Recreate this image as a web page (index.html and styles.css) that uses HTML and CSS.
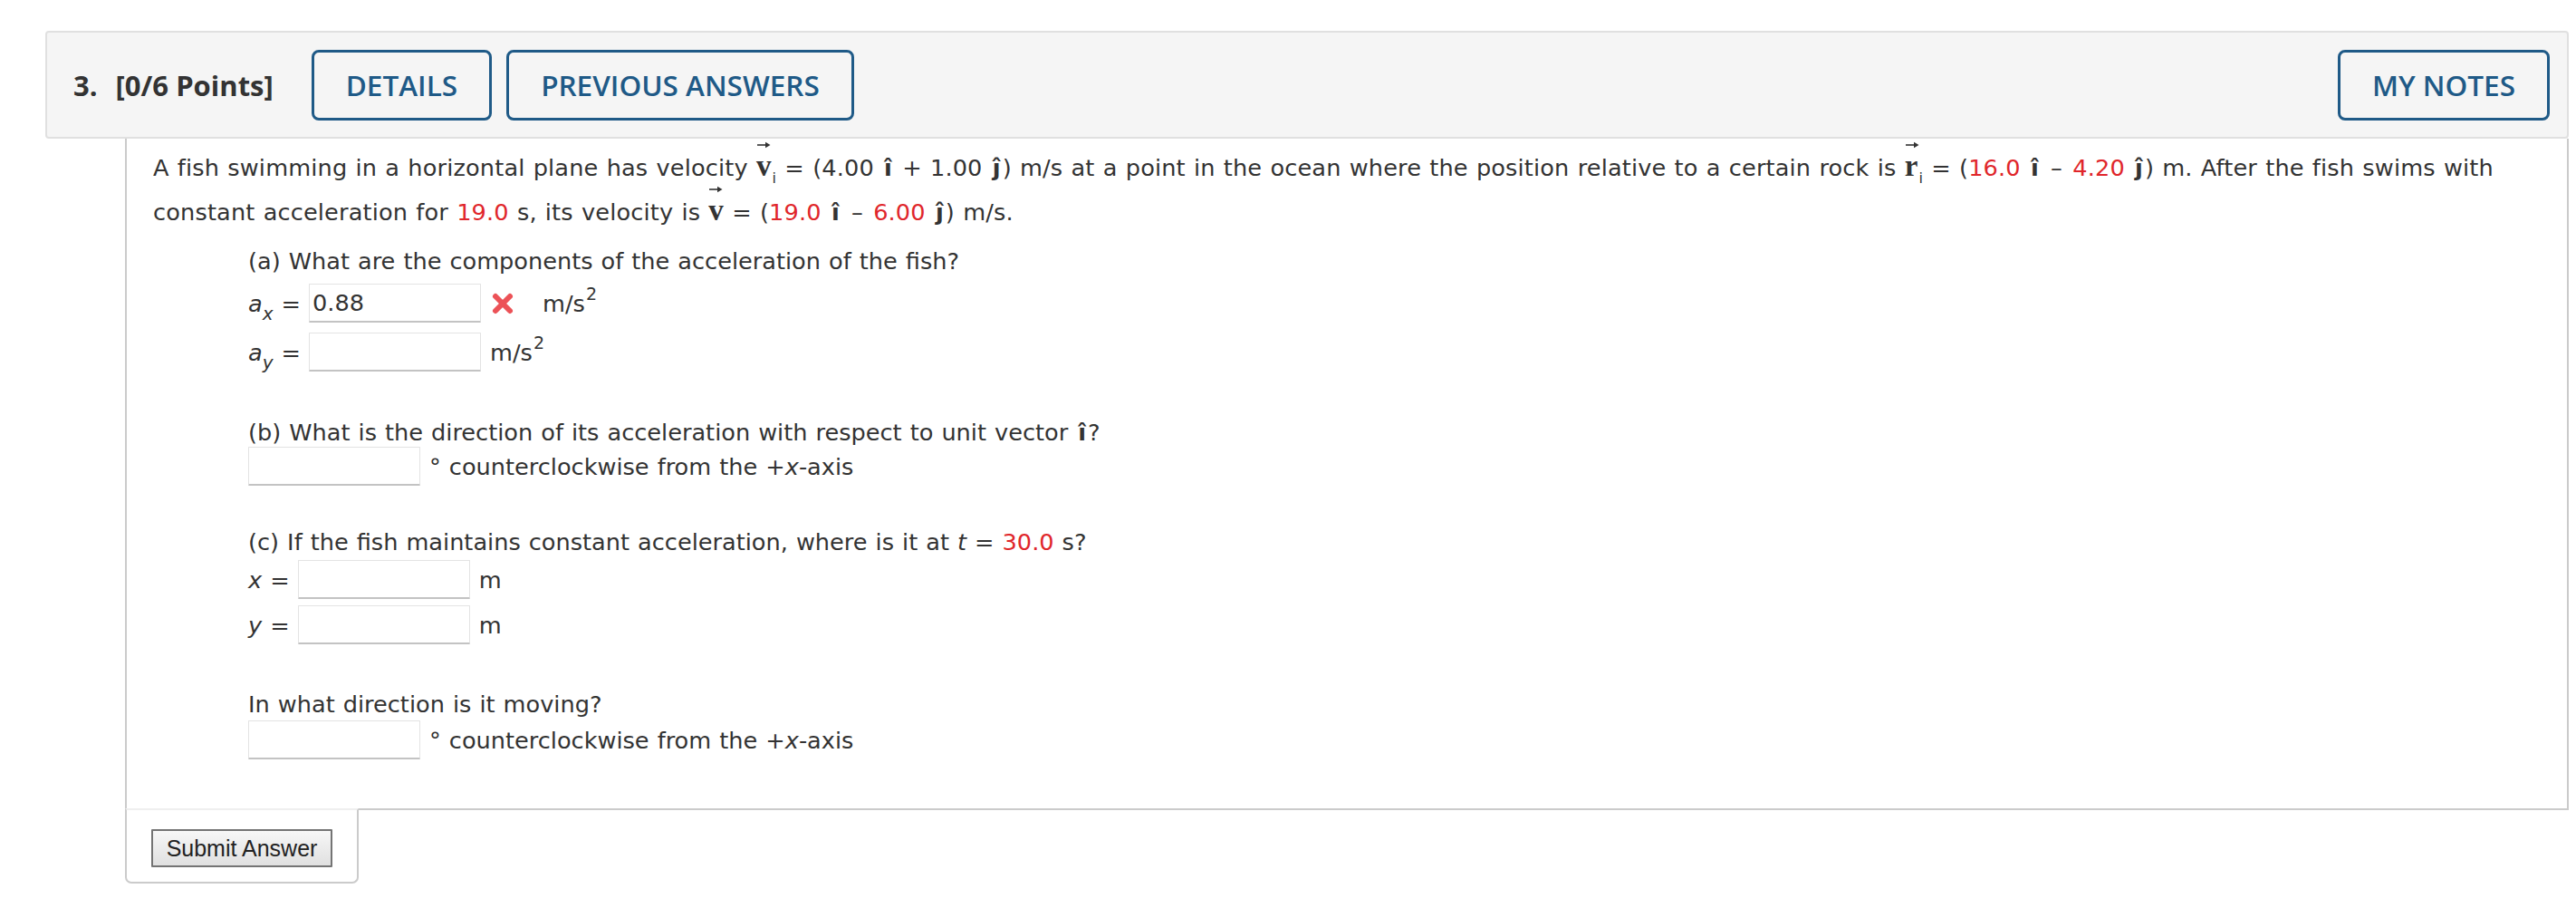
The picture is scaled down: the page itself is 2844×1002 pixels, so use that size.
FILE: index.html
```html
<!DOCTYPE html>
<html>
<head>
<meta charset="utf-8">
<link rel="stylesheet" href="styles.css">
</head>
<body>
<div class="question">
  <div class="qheader">
    <div class="qtitle"><span class="qnum">3.</span><span class="qpts">[0/6 Points]</span></div>
    <button class="hbtn">DETAILS</button>
    <button class="hbtn">PREVIOUS ANSWERS</button>
    <div class="spacer"></div>
    <button class="hbtn">MY NOTES</button>
  </div>
  <div class="qbody">
    <div class="qcontent">
      <p class="stem"><span class="ln">A fish swimming in a horizontal plane has velocity <span class="vec"><span class="vl">v</span><svg class="arr" viewBox="0 0 16 8"><line x1="1" y1="4" x2="12" y2="4" stroke="#333" stroke-width="1.6"/><polygon points="10,0.8 15.5,4 10,7.2" fill="#333"/></svg><span class="vsub">i</span></span> = (4.00 <b class="uv">î</b> + 1.00 <b class="uv">ĵ</b>) m/s at a point in the ocean where the position relative to a certain rock is <span class="vec"><span class="vl">r</span><svg class="arr" viewBox="0 0 16 8"><line x1="1" y1="4" x2="12" y2="4" stroke="#333" stroke-width="1.6"/><polygon points="10,0.8 15.5,4 10,7.2" fill="#333"/></svg><span class="vsub">i</span></span> = (<span class="red">16.0</span> <b class="uv">î</b> <span class="op">–</span> <span class="red">4.20</span> <b class="uv">ĵ</b>) m. After the fish swims with</span><br><span class="ln">constant acceleration for <span class="red">19.0</span> s, its velocity is <span class="vec"><span class="vl">v</span><svg class="arr" viewBox="0 0 16 8"><line x1="1" y1="4" x2="12" y2="4" stroke="#333" stroke-width="1.6"/><polygon points="10,0.8 15.5,4 10,7.2" fill="#333"/></svg></span> = (<span class="red">19.0</span> <b class="uv">î</b> <span class="op">–</span> <span class="red">6.00</span> <b class="uv">ĵ</b>) m/s.</span></p>

      <div class="part part-a">
        <div class="prompt">(a) What are the components of the acceleration of the fish?</div>
        <div class="row row-ax">
          <span class="lbl"><i>a</i><span class="sub">x</span> = </span>
          <input class="ans" type="text" value="0.88">
          <svg class="wrong" viewBox="0 0 26 26"><line x1="5" y1="5" x2="21" y2="21" stroke="#ec5257" stroke-width="6" stroke-linecap="round"/><line x1="21" y1="5" x2="5" y2="21" stroke="#ec5257" stroke-width="6" stroke-linecap="round"/></svg>
          <span class="unit">m/s<span class="sup">2</span></span>
        </div>
        <div class="row row-ay">
          <span class="lbl"><i>a</i><span class="sub">y</span> = </span>
          <input class="ans" type="text" value="">
          <span class="unit">m/s<span class="sup">2</span></span>
        </div>
      </div>

      <div class="part part-b">
        <div class="prompt">(b) What is the direction of its acceleration with respect to unit vector <b class="uv">î</b>?</div>
        <div class="row row-b">
          <input class="ans" type="text" value="">
          <span class="unit">° counterclockwise from the +<i>x</i>-axis</span>
        </div>
      </div>

      <div class="part part-c">
        <div class="prompt">(c) If the fish maintains constant acceleration, where is it at <i>t</i> = <span class="red">30.0</span> s?</div>
        <div class="row row-x">
          <span class="lbl"><i>x</i> = </span>
          <input class="ans" type="text" value="">
          <span class="unit">m</span>
        </div>
        <div class="row row-y">
          <span class="lbl"><i>y</i> = </span>
          <input class="ans" type="text" value="">
          <span class="unit">m</span>
        </div>
      </div>

      <div class="part part-d">
        <div class="prompt">In what direction is it moving?</div>
        <div class="row row-d">
          <input class="ans" type="text" value="">
          <span class="unit">° counterclockwise from the +<i>x</i>-axis</span>
        </div>
      </div>
    </div>
    <div class="submit-tab"><button class="submit">Submit Answer</button></div>
  </div>
</div>
</body>
</html>
```
FILE: styles.css
```css
html, body {
  background: #ffffff;
}
body {
  margin: 34px 8px 0 50px;
  font-family: "DejaVu Sans", Verdana, sans-serif;
  color: #333333;
}

.qheader {
  display: flex;
  align-items: center;
  height: 119px;
  box-sizing: border-box;
  background: #f5f5f5;
  border: 2px solid #e0e0e0;
  border-radius: 4px;
  padding: 0 19px 0 29px;
}
.qtitle {
  font-family: "Open Sans", sans-serif;
  font-weight: 700;
  font-size: 31px;
  color: #333333;
  margin-right: 42px;
  white-space: nowrap;
}
.qpts {
  margin-left: 20px;
}
.hbtn {
  height: 78px;
  box-sizing: border-box;
  border: 3px solid #1f5a87;
  border-radius: 8px;
  background: transparent;
  color: #1f5a87;
  font-family: "Open Sans", sans-serif;
  font-weight: 600;
  font-size: 31.5px;
  padding: 0 35px;
  margin-right: 16px;
  white-space: nowrap;
}
.hbtn:last-child {
  margin-right: 0;
}
.spacer {
  flex: 1;
}

.qbody {
  margin-left: 88px;
}
.qcontent {
  border: 2px solid #cbcbcb;
  border-top: none;
  padding: 8px 20px 54px 29px;
  font-size: 25.6px;
  word-spacing: 0.9px;
}
.stem {
  margin: 0;
  line-height: 49px;
  letter-spacing: 0.15px;
}
.ln {
  white-space: nowrap;
}
.red {
  color: #e0262b;
}
.uv {
  font-weight: 700;
  padding: 0 2px;
}
.op {
  padding: 0 2px;
}
.vec {
  position: relative;
  display: inline-block;
  line-height: 0;
}
.vl {
  font-family: "Liberation Serif", "Times New Roman", serif;
  font-weight: 700;
  font-size: 33px;
  line-height: 0;
}
.arr {
  position: absolute;
  left: 0;
  top: -27px;
  width: 16px;
  height: 8px;
}
.vsub {
  position: relative;
  top: 8px;
  font-size: 16px;
  line-height: 0;
  margin-left: 1px;
}

.part {
  margin-left: 105px;
}
.part-a { margin-top: 14px; }
.part-b { margin-top: 52px; }
.part-c { margin-top: 47px; }
.part-d { margin-top: 51px; }

.prompt {
  line-height: 30px;
  white-space: nowrap;
}
.row {
  display: flex;
  align-items: center;
  height: 43px;
  white-space: nowrap;
}
.row-ax { margin-top: 10px; }
.row-ay { margin-top: 11px; }
.row-b { margin-top: 1px; }
.row-x { margin-top: 5px; }
.row-y { margin-top: 7px; }
.row-d { margin-top: 3px; }

.lbl {
  white-space: pre;
  line-height: 30px;
}
.sub {
  font-style: italic;
  font-size: 20px;
  position: relative;
  top: 9px;
  line-height: 0;
}
.sup {
  font-size: 19px;
  position: relative;
  top: -13px;
  line-height: 0;
  margin-left: 1px;
}
.ans {
  width: 190px;
  height: 43px;
  box-sizing: border-box;
  margin: 0;
  border: 1px solid #e3e3e3;
  border-bottom: 2px solid #c3c3c3;
  border-radius: 1px;
  padding: 0 0 0 3px;
  background: #ffffff;
  font-family: "DejaVu Sans", Verdana, sans-serif;
  font-size: 25.6px;
  color: #333333;
  outline: none;
}
.unit {
  margin-left: 10px;
  line-height: 30px;
}
.wrong {
  width: 26px;
  height: 26px;
  margin: 0 21px 0 11px;
  flex: none;
}

.submit-tab {
  width: 258px;
  box-sizing: border-box;
  margin-top: -2px;
  border: 2px solid #cbcbcb;
  border-top-color: #efefef;
  border-radius: 0 0 7px 7px;
  padding: 21px 0 16px 27px;
  background: #ffffff;
}
.submit {
  display: block;
  width: 200px;
  height: 42px;
  box-sizing: border-box;
  border: 2px solid #747474;
  border-radius: 1px;
  background: linear-gradient(#f7f7f7, #e0e0e0);
  font-family: "Liberation Sans", Arial, sans-serif;
  font-size: 25px;
  color: #222222;
  padding: 0;
}
```
